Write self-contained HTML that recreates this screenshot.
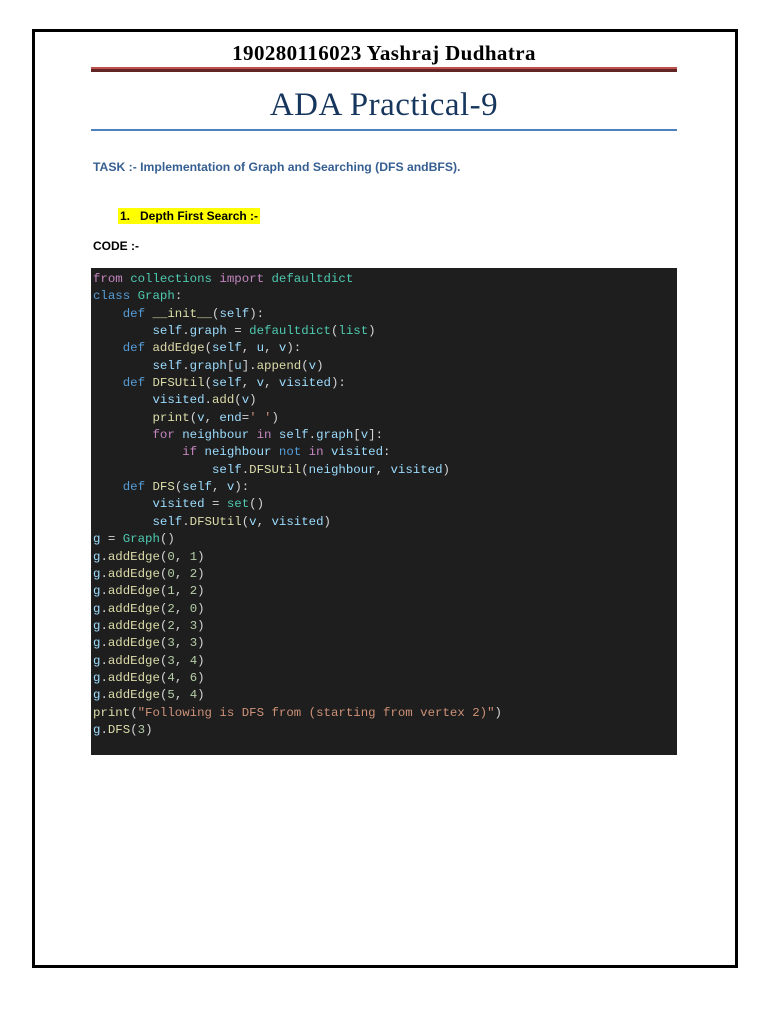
<!DOCTYPE html>
<html><head><style>
body{margin:0;width:768px;height:1024px;background:#fff;position:relative;overflow:hidden}
.b{position:absolute;left:32px;top:29px;width:700px;height:933px;border:3px solid #000}
.a{position:absolute}
pre{margin:0;font-family:"Liberation Mono",monospace;font-size:12.4px;line-height:17.35px;color:#9cdcfe}
.k{color:#c586c0}.d{color:#569cd6}.t{color:#4ec9b0}.f{color:#dcdcaa}.n{color:#b5cea8}.s{color:#ce9178}.w{color:#d4d4d4}
</style></head><body>
<div class="b"></div>
<div class="a" style="left:0;width:768px;top:41px;text-align:center;font:bold 21px 'Liberation Serif',serif;letter-spacing:0.4px;color:#000">190280116023 Yashraj Dudhatra</div>
<div class="a" style="left:91px;width:586px;top:67px;height:2px;background:#c0504d"></div>
<div class="a" style="left:91px;width:586px;top:69px;height:3px;background:#632523"></div>
<div class="a" style="left:0;width:768px;top:87px;text-align:center;font:33px 'Liberation Serif',serif;letter-spacing:0.5px;color:#17365d">ADA Practical-9</div>
<div class="a" style="left:91px;width:586px;top:129px;height:2px;background:#4f81bd"></div>
<div class="a" style="left:93px;top:160px;font:bold 12.2px 'Liberation Sans',sans-serif;color:#365f91">TASK :- Implementation of Graph and Searching (DFS andBFS).</div>
<div class="a" style="left:118px;top:208px;background:#ffff00;font:bold 12px 'Liberation Sans',sans-serif;color:#000;padding:1px 2px">1.&nbsp;&nbsp;&nbsp;Depth First Search :-</div>
<div class="a" style="left:93px;top:239px;font:bold 12px 'Liberation Sans',sans-serif;color:#000">CODE :-</div>
<div class="a" style="left:91px;top:268px;width:586px;height:487px;background:#1e1e1e"></div>
<pre class="a" style="left:93px;top:271px"><span class="k">from</span> <span class="t">collections</span> <span class="k">import</span> <span class="t">defaultdict</span>
<span class="d">class</span> <span class="t">Graph</span><span class="w">:</span>
    <span class="d">def</span> <span class="f">__init__</span><span class="w">(</span>self<span class="w">):</span>
        self<span class="w">.</span>graph <span class="w">=</span> <span class="t">defaultdict</span><span class="w">(</span><span class="t">list</span><span class="w">)</span>
    <span class="d">def</span> <span class="f">addEdge</span><span class="w">(</span>self<span class="w">,</span> u<span class="w">,</span> v<span class="w">):</span>
        self<span class="w">.</span>graph<span class="w">[</span>u<span class="w">].</span><span class="f">append</span><span class="w">(</span>v<span class="w">)</span>
    <span class="d">def</span> <span class="f">DFSUtil</span><span class="w">(</span>self<span class="w">,</span> v<span class="w">,</span> visited<span class="w">):</span>
        visited<span class="w">.</span><span class="f">add</span><span class="w">(</span>v<span class="w">)</span>
        <span class="f">print</span><span class="w">(</span>v<span class="w">,</span> end<span class="w">=</span><span class="s">' '</span><span class="w">)</span>
        <span class="k">for</span> neighbour <span class="k">in</span> self<span class="w">.</span>graph<span class="w">[</span>v<span class="w">]:</span>
            <span class="k">if</span> neighbour <span class="d">not</span> <span class="k">in</span> visited<span class="w">:</span>
                self<span class="w">.</span><span class="f">DFSUtil</span><span class="w">(</span>neighbour<span class="w">,</span> visited<span class="w">)</span>
    <span class="d">def</span> <span class="f">DFS</span><span class="w">(</span>self<span class="w">,</span> v<span class="w">):</span>
        visited <span class="w">=</span> <span class="t">set</span><span class="w">()</span>
        self<span class="w">.</span><span class="f">DFSUtil</span><span class="w">(</span>v<span class="w">,</span> visited<span class="w">)</span>
g <span class="w">=</span> <span class="t">Graph</span><span class="w">()</span>
g<span class="w">.</span><span class="f">addEdge</span><span class="w">(</span><span class="n">0</span><span class="w">,</span> <span class="n">1</span><span class="w">)</span>
g<span class="w">.</span><span class="f">addEdge</span><span class="w">(</span><span class="n">0</span><span class="w">,</span> <span class="n">2</span><span class="w">)</span>
g<span class="w">.</span><span class="f">addEdge</span><span class="w">(</span><span class="n">1</span><span class="w">,</span> <span class="n">2</span><span class="w">)</span>
g<span class="w">.</span><span class="f">addEdge</span><span class="w">(</span><span class="n">2</span><span class="w">,</span> <span class="n">0</span><span class="w">)</span>
g<span class="w">.</span><span class="f">addEdge</span><span class="w">(</span><span class="n">2</span><span class="w">,</span> <span class="n">3</span><span class="w">)</span>
g<span class="w">.</span><span class="f">addEdge</span><span class="w">(</span><span class="n">3</span><span class="w">,</span> <span class="n">3</span><span class="w">)</span>
g<span class="w">.</span><span class="f">addEdge</span><span class="w">(</span><span class="n">3</span><span class="w">,</span> <span class="n">4</span><span class="w">)</span>
g<span class="w">.</span><span class="f">addEdge</span><span class="w">(</span><span class="n">4</span><span class="w">,</span> <span class="n">6</span><span class="w">)</span>
g<span class="w">.</span><span class="f">addEdge</span><span class="w">(</span><span class="n">5</span><span class="w">,</span> <span class="n">4</span><span class="w">)</span>
<span class="f">print</span><span class="w">(</span><span class="s">"Following is DFS from (starting from vertex 2)"</span><span class="w">)</span>
g<span class="w">.</span><span class="f">DFS</span><span class="w">(</span><span class="n">3</span><span class="w">)</span></pre>
</body></html>
